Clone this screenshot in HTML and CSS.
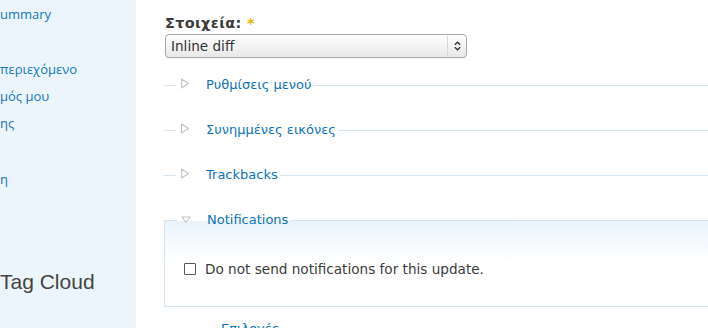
FILE: index.html
```html
<!DOCTYPE html>
<html lang="el">
<head>
<meta charset="utf-8">
<title>Στοιχεία</title>
<link rel="stylesheet" href="styles.css">
</head>
<body>
<div class="page">
  <aside class="sidebar">
    <ul class="menu">
      <li><a href="#">ummary</a></li>
    </ul>
    <ul class="menu group">
      <li><a href="#">περιεχόμενο</a></li>
      <li><a href="#">μός μου</a></li>
      <li><a href="#">ης</a></li>
    </ul>
    <ul class="menu group2">
      <li><a href="#">η</a></li>
    </ul>
    <h2 class="block-title">Tag Cloud</h2>
  </aside>
  <main class="main">
    <div class="form-item">
      <label class="label">Στοιχεία: <span class="req">*</span></label>
      <div class="select">
        <span class="select-text">Inline diff</span>
        <span class="select-arrow">
          <svg width="7" height="10" viewBox="0 0 7 10"><path d="M0.8 3.8 L3.5 1.2 L6.2 3.8 M0.8 6.2 L3.5 8.8 L6.2 6.2" fill="none" stroke="#333" stroke-width="1.3"/></svg>
        </span>
      </div>
    </div>

    <fieldset class="fs collapsed">
      <legend class="legend"><svg class="tri" width="10" height="11" viewBox="0 0 10 11"><path d="M1.5 1 L8.5 5.5 L1.5 10 Z" fill="#fff" stroke="#c4c4c4" stroke-width="1.1" stroke-linejoin="round"/></svg><a href="#">Ρυθμίσεις μενού</a></legend>
    </fieldset>
    <fieldset class="fs collapsed">
      <legend class="legend"><svg class="tri" width="10" height="11" viewBox="0 0 10 11"><path d="M1.5 1 L8.5 5.5 L1.5 10 Z" fill="#fff" stroke="#c4c4c4" stroke-width="1.1" stroke-linejoin="round"/></svg><a href="#">Συνημμένες εικόνες</a></legend>
    </fieldset>
    <fieldset class="fs collapsed">
      <legend class="legend"><svg class="tri" width="10" height="11" viewBox="0 0 10 11"><path d="M1.5 1 L8.5 5.5 L1.5 10 Z" fill="#fff" stroke="#c4c4c4" stroke-width="1.1" stroke-linejoin="round"/></svg><a href="#">Trackbacks</a></legend>
    </fieldset>
    <fieldset class="fs expanded">
      <legend class="legend"><svg class="tri" width="10" height="11" viewBox="0 0 10 11"><path d="M1 2 L9 2 L5 7.5 Z" fill="#fff" stroke="#c4c4c4" stroke-width="1.1" stroke-linejoin="round"/></svg><a href="#">Notifications</a></legend>
      <div class="check-row">
        <span class="checkbox"></span>
        <span class="check-label">Do not send notifications for this update.</span>
      </div>
    </fieldset>
    <div class="next"><a href="#">Επιλογές</a></div>
  </main>
</div>
</body>
</html>
```

FILE: styles.css
```css
html, body {
  margin: 0;
  padding: 0;
  background: #fff;
  overflow: hidden;
}
body {
  font-family: "DejaVu Sans", Verdana, sans-serif;
  font-size: 13.6px;
  color: #3b3b3b;
}
a {
  color: #0a73bb;
  text-decoration: none;
}
.page {
  display: flex;
  height: 328px;
}
.sidebar {
  width: 136px;
  flex: none;
  background: #edf5fc;
  overflow: hidden;
}
.menu {
  list-style: none;
  margin: 0;
  padding: 0;
  font-family: "Open Sans", "Noto Sans", sans-serif;
  font-size: 13px;
  line-height: 27px;
}
.menu:first-child {
  margin-top: 1px;
}
.menu li a {
  color: #1377c0;
}
.group {
  margin-top: 28px;
}
.group2 {
  margin-top: 29px;
}
.block-title {
  margin: 77px 0 0 0;
  font-family: "Liberation Sans", Arial, sans-serif;
  font-weight: normal;
  font-size: 21px;
  line-height: 24px;
  color: #444;
}
.main {
  flex: 1;
  padding: 14px 0 0 28px;
  min-width: 0;
}
.form-item {
  margin-left: 1px;
}
.label {
  display: block;
  font-weight: bold;
  font-size: 14.4px;
  letter-spacing: 0.4px;
  line-height: 18px;
  margin-bottom: 2px;
}
.req {
  color: #f4b400;
  font-weight: bold;
}
.select {
  width: 300px;
  height: 22px;
  border: 1px solid #a8a8a8;
  border-radius: 4px;
  background: linear-gradient(#ffffff, #e8e8e8);
  display: flex;
  align-items: center;
  box-shadow: 0 1px 1px rgba(0,0,0,0.06);
}
.select-text {
  flex: 1;
  padding-left: 5px;
  color: #333;
}
.select-arrow {
  width: 18px;
  height: 20px;
  border-left: 1px solid #d8d8d8;
  display: flex;
  align-items: center;
  justify-content: center;
}
.fs {
  margin: 0 -20px 29px 0;
  padding: 0;
  border: 0;
  border-top: 1px solid #d5e5f1;
  min-width: 0;
}
.main > .fs:first-of-type {
  margin-top: 19px;
}
.legend {
  margin-left: 12px;
  padding: 0 2px 0 4px;
  display: flex;
  align-items: center;
  font-size: 13px;
  line-height: 16px;
  height: 16px;
}
.tri {
  display: block;
  margin-right: 16px;
  margin-top: -3px;
}
.expanded {
  border: 1px solid #d5e5f1;
  background: linear-gradient(#eaf3fb 0px, #ffffff 42px);
  padding: 0 0 29px 19px;
  margin-bottom: 0;
}
.expanded .legend {
  margin-left: -7px;
}
.expanded .legend .tri {
  margin-top: 0;
}
.check-row {
  display: flex;
  align-items: center;
  margin-top: 33px;
  line-height: 16px;
}
.checkbox {
  width: 10px;
  height: 10px;
  border: 1px solid #555;
  border-radius: 1px;
  background: #fff;
  margin-right: 9px;
  flex: none;
}
.next {
  margin: 14px 0 0 57px;
  font-size: 13px;
  line-height: 16px;
}
```
